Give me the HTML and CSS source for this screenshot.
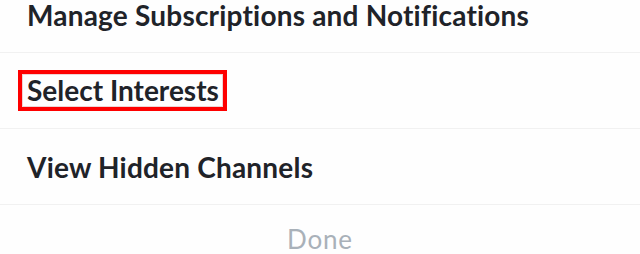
FILE: index.html
```html
<!DOCTYPE html>
<html>
<head>
<meta charset="utf-8">
<link rel="stylesheet" href="styles.css">
</head>
<body>
<div class="sheet">
  <div class="row first"><span class="label">Manage Subscriptions and Notifications</span></div>
  <div class="row"><span class="label highlight">Select Interests</span></div>
  <div class="row"><span class="label">View Hidden Channels</span></div>
  <div class="done">Done</div>
</div>
</body>
</html>
```

FILE: styles.css
```css
html, body {
  margin: 0;
  padding: 0;
  background: #fefefe;
  overflow: hidden;
}
.sheet {
  width: 640px;
  height: 254px;
  overflow: hidden;
  font-family: Lato, "Noto Sans", sans-serif;
}
.row {
  display: flex;
  align-items: center;
  padding-left: 27px;
  border-bottom: 1px solid #f1f1f1;
  box-sizing: border-box;
  height: 76px;
}
.row.first {
  margin-top: -23px;
}
.label {
  font-size: 28px;
  font-weight: 700;
  color: #1f2329;
  line-height: 28px;
  letter-spacing: 0.2px;
}
.highlight {
  letter-spacing: 0;
  line-height: 33px;
  margin-left: -9px;
  padding: 0 4px 0 5px;
  border: 4px solid #fe0000;
  box-shadow: inset 0 0 0 1px #eed4d4;
}
.done {
  height: 50px;
  box-sizing: border-box;
  padding-top: 21px;
  text-align: center;
  font-size: 26px;
  line-height: 26px;
  font-weight: 400;
  letter-spacing: 0.8px;
  color: #a9b1b9;
}
```
